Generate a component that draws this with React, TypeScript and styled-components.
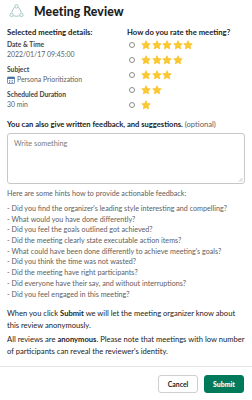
import React from 'react';
import styled, { createGlobalStyle } from 'styled-components';

const GlobalStyle = createGlobalStyle`
  body {
    margin: 0;
    background: #ffffff;
    font-family: Lato, "Noto Sans", sans-serif;
    color: #1d1c1d;
  }
`;

const Modal = styled.div`
  width: 252px;
  height: 400px;
  overflow: hidden;
  background: #ffffff;
`;

const Header = styled.header`
  display: flex;
  align-items: center;
  gap: 10px;
  padding: 2px 9px 0;
  height: 18px;
`;

const Title = styled.h1`
  margin: 0;
  font-size: 12.2px;
  font-weight: 900;
  letter-spacing: 0.1px;
`;

const Body = styled.div`
  padding: 0 7px;
`;

const Columns = styled.div`
  display: grid;
  grid-template-columns: 120px 1fr;
  margin-top: 7px;
`;

const SectionTitle = styled.div<{ $tight?: boolean }>`
  font-size: 7.7px;
  font-weight: 700;
  line-height: 10px;
  margin-bottom: ${({ $tight }) => ($tight ? '0' : '2px')};
`;

const Field = styled.div`
  display: flex;
  flex-direction: column;
  margin-bottom: 4px;
`;

const FieldLabel = styled.div`
  font-size: 6.7px;
  font-weight: 700;
  color: #454245;
  line-height: 10px;
`;

const FieldValue = styled.div`
  display: flex;
  align-items: center;
  gap: 2px;
  font-size: 6.9px;
  color: #616061;
  line-height: 11px;
`;

const RatingList = styled.div`
  display: flex;
  flex-direction: column;
  padding-left: 1px;
`;

const RatingRow = styled.label`
  display: flex;
  align-items: center;
  height: 15.2px;
  gap: 6px;
`;

const Radio = styled.span`
  width: 4px;
  height: 4px;
  border: 1px solid #8d8d8d;
  border-radius: 50%;
  margin-left: 1px;
`;

const Stars = styled.span`
  display: flex;
  gap: 0.6px;
`;

const FeedbackLabel = styled.div`
  margin-top: 5px;
  font-size: 7.6px;
  font-weight: 700;
  line-height: 10px;
`;

const Optional = styled.span`
  font-weight: 400;
  color: #616061;
`;

const TextBox = styled.div`
  position: relative;
  margin-top: 4px;
  height: 51px;
  border: 1px solid #c7c7c7;
  border-radius: 3px;
  padding: 5px 6px;
  box-sizing: border-box;
  font-size: 7.3px;
  color: #7b7a7b;
`;

const Grip = styled.svg`
  position: absolute;
  right: 1px;
  bottom: 1px;
`;

const HintIntro = styled.div`
  margin-top: 5px;
  font-size: 7.2px;
  color: #616061;
  line-height: 9px;
`;

const HintList = styled.ul`
  list-style: none;
  margin: 6px 0 0;
  padding: 0;
`;

const Hint = styled.li`
  display: block;
  height: 10.7px;
  font-size: 7.2px;
  color: #616061;
  line-height: 10.7px;
  white-space: nowrap;
`;

const Note = styled.p`
  margin: 7px 0 0;
  font-size: 7.6px;
  line-height: 12.2px;
  color: #1d1c1d;

  & + & {
    margin-top: 1px;
  }
`;

const Footer = styled.footer`
  display: flex;
  justify-content: flex-end;
  gap: 6px;
  margin-top: 9px;
  padding: 8px 8px 0;
  border-top: 1px solid #e6e6e6;
`;

const Button = styled.button<{ $primary?: boolean }>`
  height: 18px;
  padding: 0 7px;
  border-radius: 3px;
  font-family: Lato, "Noto Sans", sans-serif;
  font-size: 6.9px;
  font-weight: ${({ $primary }) => ($primary ? 900 : 700)};
  border: 1px solid ${({ $primary }) => ($primary ? '#007a5a' : '#cfcfcf')};
  background: ${({ $primary }) => ($primary ? '#007a5a' : '#ffffff')};
  color: ${({ $primary }) => ($primary ? '#ffffff' : '#1d1c1d')};
  min-width: 40px;
`;

const Logo = () => (
  <svg width="15" height="14" viewBox="0 0 15 14" fill="none">
    <path
      d="M5.6 3.2 Q3.4 5.6 2.8 8.6 M9.4 3.2 Q11.6 5.6 12.2 8.6 M4.6 11.8 Q7.5 12.8 10.4 11.8"
      stroke="#a9c5c8"
      strokeWidth="1"
    />
    <circle cx="7.5" cy="2.4" r="1.7" stroke="#a9c5c8" strokeWidth="1" />
    <circle cx="2.6" cy="10.9" r="1.7" stroke="#a9c5c8" strokeWidth="1" />
    <circle cx="12.4" cy="10.9" r="1.7" stroke="#a9c5c8" strokeWidth="1" />
  </svg>
);

const CalendarIcon = () => (
  <svg width="8" height="8" viewBox="0 0 8 8">
    <rect x="0.5" y="1" width="7" height="6.5" rx="0.6" fill="#ffffff" stroke="#5b7fa6" strokeWidth="0.8" />
    <rect x="0.5" y="1" width="7" height="2" fill="#4a74a8" />
    <rect x="2" y="4.2" width="1.2" height="1" fill="#4a74a8" />
    <rect x="4.6" y="4.2" width="1.2" height="1" fill="#4a74a8" />
    <rect x="2" y="5.8" width="1.2" height="1" fill="#4a74a8" />
    <rect x="4.6" y="5.8" width="1.2" height="1" fill="#4a74a8" />
  </svg>
);

const Star = () => (
  <svg width="10" height="10" viewBox="0 0 24 24">
    <path
      d="M12 1.6l3.1 6.6 7.2 0.9-5.3 5 1.4 7.2L12 17.8l-6.4 3.5 1.4-7.2-5.3-5 7.2-0.9z"
      fill="#fcc934"
      stroke="#f4b400"
      strokeWidth="1.2"
      strokeLinejoin="round"
    />
  </svg>
);

const hints = [
  "Did you find the organizer's leading style interesting and compelling?",
  'What would you have done differently?',
  'Did you feel the goals outlined got achieved?',
  'Did the meeting clearly state executable action items?',
  "What could have been done differently to achieve meeting's goals?",
  'Did you think the time was not wasted?',
  'Did the meeting have right participants?',
  'Did everyone have their say, and without interruptions?',
  'Did you feel engaged in this meeting?',
];

export default function App() {
  return (
    <>
      <GlobalStyle />
      <Modal>
        <Header>
          <Logo />
          <Title>Meeting Review</Title>
        </Header>

        <Body>
          <Columns>
            <div>
              <SectionTitle>Selected meeting details:</SectionTitle>
              <Field>
                <FieldLabel>Date &amp; Time</FieldLabel>
                <FieldValue>2022/01/17 09:45:00</FieldValue>
              </Field>
              <Field>
                <FieldLabel>Subject</FieldLabel>
                <FieldValue>
                  <CalendarIcon />
                  Persona Prioritization
                </FieldValue>
              </Field>
              <Field>
                <FieldLabel>Scheduled Duration</FieldLabel>
                <FieldValue>30 min</FieldValue>
              </Field>
            </div>

            <div>
              <SectionTitle $tight>How do you rate the meeting?</SectionTitle>
              <RatingList>
                {[5, 4, 3, 2, 1].map((count) => (
                  <RatingRow key={count}>
                    <Radio />
                    <Stars>
                      {Array.from({ length: count }).map((_, i) => (
                        <Star key={i} />
                      ))}
                    </Stars>
                  </RatingRow>
                ))}
              </RatingList>
            </div>
          </Columns>

          <FeedbackLabel>
            You can also give written feedback, and suggestions. <Optional>(optional)</Optional>
          </FeedbackLabel>

          <TextBox>
            Write something
            <Grip width="5" height="5" viewBox="0 0 5 5">
              <path d="M4.5 1 L1 4.5 M4.5 3 L3 4.5" stroke="#9a9a9a" strokeWidth="0.6" />
            </Grip>
          </TextBox>

          <HintIntro>Here are some hints how to provide actionable feedback:</HintIntro>
          <HintList>
            {hints.map((hint) => (
              <Hint key={hint}>- {hint}</Hint>
            ))}
          </HintList>

          <Note>
            When you click <b>Submit</b> we will let the meeting organizer know about this review
            anonymously.
          </Note>
          <Note>
            All reviews are <b>anonymous</b>. Please note that meetings with low number of
            participants can reveal the reviewer's identity.
          </Note>
        </Body>

        <Footer>
          <Button>Cancel</Button>
          <Button $primary>Submit</Button>
        </Footer>
      </Modal>
    </>
  );
}
